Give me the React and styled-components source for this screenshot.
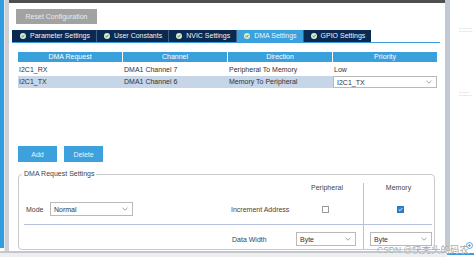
import React from "react";
import styled, { createGlobalStyle } from "styled-components";

const Global = createGlobalStyle`
  html, body { margin: 0; padding: 0; background: #fff; }
  body { font-family: "Liberation Sans", Arial, sans-serif; font-size: 7px; color: #333; }
  * { box-sizing: border-box; }
`;

const FONT = `"Liberation Sans", Arial, sans-serif`;

const Screen = styled.div`
  position: relative;
  width: 474px;
  height: 257px;
  display: flex;
  flex-direction: column;
  overflow: hidden;
  background: #fff;
`;

const Upper = styled.div`
  display: flex;
  height: 251px;
  flex: none;
`;

const Rail = styled.div`
  display: flex;
  flex: none;
  width: 9px;
`;

const BlueStrip = styled.div`
  width: 4px;
  height: 248px;
  background: #2f9de0;
`;

const Gutter = styled.div`
  width: 5px;
  border-left: 1px solid #e6e8ea;
  background: #cdd1d5;
`;

const Main = styled.main`
  width: 436px;
  flex: none;
  display: flex;
  flex-direction: column;
  background: #fff;
`;

const TopBar = styled.div`
  height: 3px;
  background: #4f4f4f;
`;

const ResetButton = styled.button`
  align-self: flex-start;
  margin: 6px 0 0 7px;
  width: 81px;
  height: 15px;
  padding: 0;
  border: none;
  background: #a2a2a2;
  color: #ececec;
  font: 7px ${FONT};
`;

const TabBar = styled.div`
  display: flex;
  margin: 6px 5px 0 3px;
  border-bottom: 1px solid #3b9bdc;
`;

const Tab = styled.div`
  display: flex;
  align-items: center;
  gap: 4px;
  height: 12px;
  padding: 0 6px 0 7px;
  background: ${(p) => (p.$active ? "#3aa3dd" : "#0b2a52")};
  color: #eef3f8;
  border-left: 1px solid ${(p) => (p.$first ? "#0b2a52" : "#3f5f86")};
  white-space: nowrap;
  line-height: 12px;
`;

const Table = styled.div`
  margin: 9px 8px 0 9px;
`;

const HeadRow = styled.div`
  display: grid;
  grid-template-columns: repeat(4, 1fr);
  column-gap: 1px;
  height: 10px;
`;

const HeadCell = styled.div`
  background: #3aa0dc;
  color: #fff;
  text-align: center;
  line-height: 10px;
`;

const Body = styled.div`
  margin-top: 2px;
`;

const Row = styled.div`
  display: grid;
  grid-template-columns: repeat(4, 1fr);
  column-gap: 1px;
  height: 12px;
  align-items: center;
  background: ${(p) => (p.$selected ? "#c6d5e7" : "transparent")};
`;

const Cell = styled.div`
  padding-left: 1px;
  line-height: 12px;
  color: #333;
  white-space: nowrap;
`;

const SelectBox = styled.div`
  display: flex;
  align-items: center;
  justify-content: space-between;
  width: ${(p) => p.$w || "auto"};
  height: ${(p) => p.$h || 14}px;
  margin-left: ${(p) => p.$ml || 0}px;
  padding: 0 4px 0 3px;
  background: #fff;
  border: 1px solid #b9b9b9;
  color: #333;
  white-space: nowrap;
`;

const Chevron = () => (
  <svg width="6" height="4" viewBox="0 0 6 4">
    <path d="M0.5 0.8 L3 3.2 L5.5 0.8" fill="none" stroke="#8a8a8a" strokeWidth="0.8" />
  </svg>
);

const Select = ({ value, w, h, ml }) => (
  <SelectBox $w={w} $h={h} $ml={ml}>
    <span>{value}</span>
    <Chevron />
  </SelectBox>
);

const ButtonBar = styled.div`
  display: flex;
  gap: 7px;
  margin: 58px 0 0 9px;
`;

const ActionButton = styled.button`
  width: 39px;
  height: 16px;
  padding: 0;
  border: none;
  background: #3ca1dd;
  color: #e8f4fc;
  font: 7px ${FONT};
`;

const Settings = styled.fieldset`
  margin: 8px 10px 0 9px;
  padding: 0 1px 0 7px;
  height: 80px;
  min-width: 0;
  border: 1px solid #cacaca;
  border-radius: 4px;
`;

const Legend = styled.legend`
  margin-left: -4px;
  padding: 0 2px;
  font-size: 7px;
  line-height: 8px;
  color: #444;
`;

const Grid = styled.div`
  display: grid;
  grid-template-columns: 205px 60px 72px 1px 1fr;
  grid-template-rows: 21px 20px 10px 20px;
  align-items: center;
`;

const ColHead = styled.div`
  grid-row: 1;
  grid-column: ${(p) => p.$col};
  align-self: start;
  margin-top: 5px;
  line-height: 10px;
  text-align: center;
  color: #444;
`;

const VDivider = styled.div`
  grid-column: 4;
  grid-row: 1 / -1;
  align-self: stretch;
  margin-top: 5px;
  background: #b9c3dc;
`;

const HLine = styled.div`
  grid-column: 1 / -1;
  grid-row: 3;
  height: 1px;
  margin: 0 1px 0 -2px;
  background: #b7c1dc;
`;

const Field = styled.div`
  grid-row: ${(p) => p.$row};
  grid-column: ${(p) => p.$col};
  display: flex;
  align-items: center;
  justify-content: ${(p) => (p.$center ? "center" : "flex-start")};
  white-space: nowrap;
  color: #444;
  padding-left: ${(p) => p.$pl || 0}px;
`;

const Label = styled.span`
  width: ${(p) => p.$w}px;
  flex: none;
`;

const Check = styled.div`
  width: 7px;
  height: 7px;
  margin-left: ${(p) => p.$ml || 0}px;
  border: 1px solid ${(p) => (p.$on ? "#2a77c8" : "#9a9a9a")};
  background: ${(p) => (p.$on ? "#2f7fd0" : "#fff")};
  display: flex;
  align-items: center;
  justify-content: center;
`;

const RightBar = styled.div`
  width: 5px;
  flex: none;
  background: #c2c9d0;
`;

const Side = styled.aside`
  flex: 1;
  display: flex;
  flex-direction: column;
  padding-left: 9px;
  background: #fff;
`;

const Tiny = styled.div`
  margin-top: ${(p) => p.$mt}px;
  font-size: 2.6px;
  line-height: 3px;
  color: #8f969c;
  white-space: nowrap;
`;

const SideIcon = styled.div`
  margin-top: auto;
  margin-bottom: 2px;
  align-self: flex-end;
  margin-right: 1px;
  display: flex;
`;

const Bottom = styled.div`
  flex: 1;
  display: flex;
`;

const BottomLeft = styled.div`
  flex: 1;
  border-top: 2px solid #c4c8cc;
  background: #eceef0;
`;

const BottomRight = styled.div`
  width: 27px;
  background: #fff;
  padding-top: 2px;
  &::before {
    content: "";
    display: block;
    height: 2px;
    background: #3a9ad9;
  }
`;

const Watermark = styled.div`
  position: absolute;
  left: 377px;
  top: 242px;
  color: #a8a8a8;
  white-space: nowrap;
  text-shadow: 0 0 1px #fff;
  line-height: 11px;
`;

const WmLatin = styled.span`
  font: 8.5px ${FONT};
`;

const WmCjk = styled.span`
  font: 9.5px "Noto Sans CJK SC", sans-serif;
`;

const CheckIcon = () => (
  <svg width="6" height="6" viewBox="0 0 6 6">
    <circle cx="3" cy="3" r="3" fill="#d8ecd2" />
    <path d="M1.6 3.1 L2.6 4 L4.4 2" fill="none" stroke="#2a5a3a" strokeWidth="0.8" />
  </svg>
);

const tabs = [
  "Parameter Settings",
  "User Constants",
  "NVIC Settings",
  "DMA Settings",
  "GPIO Settings",
];

export default function App() {
  return (
    <Screen>
      <Global />
      <Upper>
        <Rail>
          <BlueStrip />
          <Gutter />
        </Rail>
        <Main>
          <TopBar />
          <ResetButton>Reset Configuration</ResetButton>
          <TabBar>
            {tabs.map((t, i) => (
              <Tab key={t} $active={t === "DMA Settings"} $first={i === 0}>
                <CheckIcon />
                {t}
              </Tab>
            ))}
          </TabBar>
          <Table>
            <HeadRow>
              <HeadCell>DMA Request</HeadCell>
              <HeadCell>Channel</HeadCell>
              <HeadCell>Direction</HeadCell>
              <HeadCell>Priority</HeadCell>
            </HeadRow>
            <Body>
              <Row>
                <Cell>I2C1_RX</Cell>
                <Cell>DMA1 Channel 7</Cell>
                <Cell>Peripheral To Memory</Cell>
                <Cell>Low</Cell>
              </Row>
              <Row $selected>
                <Cell>I2C1_TX</Cell>
                <Cell>DMA1 Channel 6</Cell>
                <Cell>Memory To Peripheral</Cell>
                <Select value="I2C1_TX" h={12} />
              </Row>
            </Body>
          </Table>
          <ButtonBar>
            <ActionButton>Add</ActionButton>
            <ActionButton>Delete</ActionButton>
          </ButtonBar>
          <Settings>
            <Legend>DMA Request Settings</Legend>
            <Grid>
              <ColHead $col={3}>Peripheral</ColHead>
              <ColHead $col={5}>Memory</ColHead>
              <VDivider />
              <Field $row={2} $col={1}>
                <Label $w={24}>Mode</Label>
                <Select value="Normal" w="83px" />
              </Field>
              <Field $row={2} $col={2}>Increment Address</Field>
              <Field $row={2} $col={3} $center>
                <Check $ml={-3} />
              </Field>
              <Field $row={2} $col={5} $center>
                <Check $on $ml={3}>
                  <svg width="5" height="5" viewBox="0 0 5 5">
                    <path d="M0.8 2.6 L2 3.7 L4.2 1.2" fill="none" stroke="#fff" strokeWidth="0.9" />
                  </svg>
                </Check>
              </Field>
              <HLine />
              <Field $row={4} $col={2} $pl={1}>Data Width</Field>
              <Field $row={4} $col={3}>
                <Select value="Byte" w="60px" ml={5} />
              </Field>
              <Field $row={4} $col={5}>
                <Select value="Byte" w="62px" ml={6} />
              </Field>
            </Grid>
          </Settings>
        </Main>
        <RightBar />
        <Side>
          <Tiny $mt={27}>
            ---- ------ ---
            <br />
            --- ------ -----
          </Tiny>
          <Tiny $mt={58}>
            --- ---- ---
            <br />
            ---- ----- ----
          </Tiny>
          <SideIcon>
            <svg width="7" height="7" viewBox="0 0 7 7">
              <circle cx="3.5" cy="3.5" r="3" fill="#fff" stroke="#3a8fd8" strokeWidth="0.8" />
              <path d="M3.5 2 V5 M2 3.5 H5" stroke="#3a8fd8" strokeWidth="0.7" />
            </svg>
          </SideIcon>
        </Side>
      </Upper>
      <Bottom>
        <BottomLeft />
        <BottomRight />
      </Bottom>
      <Watermark>
        <WmLatin>CSDN @</WmLatin>
        <WmCjk>快秃头的码农</WmCjk>
      </Watermark>
    </Screen>
  );
}
